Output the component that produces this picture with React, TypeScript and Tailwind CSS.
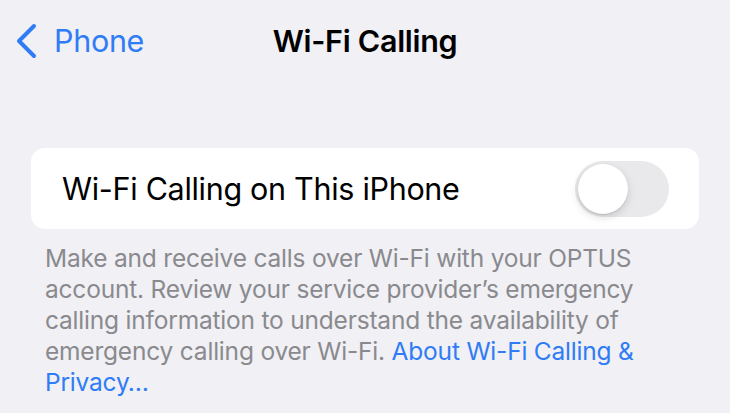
import React, { useState } from 'react';

export default function App() {
  const [enabled, setEnabled] = useState(false);

  return (
    <div
      className="w-[730px] h-[413px] overflow-hidden bg-[#f0f0f5] text-black"
      style={{ fontFamily: 'Inter, Roboto, "Liberation Sans", sans-serif' }}
    >
      {/* Nav bar */}
      <div className="relative h-[82px] flex items-center px-[14px]">
        <button className="flex items-center gap-[16px] text-[#2f7cf6]">
          <svg width="24" height="36" viewBox="0 0 24 36" fill="none">
            <path d="M20 3 L5 18 L20 33" stroke="currentColor" strokeWidth="4" strokeLinecap="round" strokeLinejoin="round" />
          </svg>
          <span className="text-[30.5px] leading-none tracking-[-0.3px]">Phone</span>
        </button>
        <h1 className="absolute left-0 right-0 text-center text-[30.5px] font-semibold leading-none tracking-[-0.3px] pointer-events-none">
          Wi-Fi Calling
        </h1>
      </div>

      {/* Settings group */}
      <div className="pt-[66px] px-[31px]">
        <div className="h-[81px] bg-white rounded-[14px] flex items-center justify-between pl-[31px] pr-[30px]">
          <span className="text-[30.5px] tracking-[-0.3px]">Wi-Fi Calling on This iPhone</span>
          <button
            onClick={() => setEnabled(!enabled)}
            className={`w-[94px] h-[56px] rounded-full p-[3px] flex ${enabled ? 'bg-[#34c759] justify-end' : 'bg-[#e9e9eb] justify-start'}`}
          >
            <span className="w-[50px] h-[50px] rounded-full bg-white shadow-[0_3px_8px_rgba(0,0,0,0.15),0_1px_1px_rgba(0,0,0,0.1)]" />
          </button>
        </div>
      </div>

      {/* Footer */}
      <p className="mt-[14px] pl-[45px] pr-[90px] text-[24.5px] leading-[31px] tracking-[-0.2px] text-[#8a8a8e]">
        Make and receive calls over Wi-Fi with your OPTUS account. Review your service provider’s emergency calling information to understand the availability of emergency calling over Wi-Fi.{' '}
        <a className="text-[#2f7cf6]">About Wi-Fi Calling &amp; Privacy…</a>
      </p>
    </div>
  );
}
